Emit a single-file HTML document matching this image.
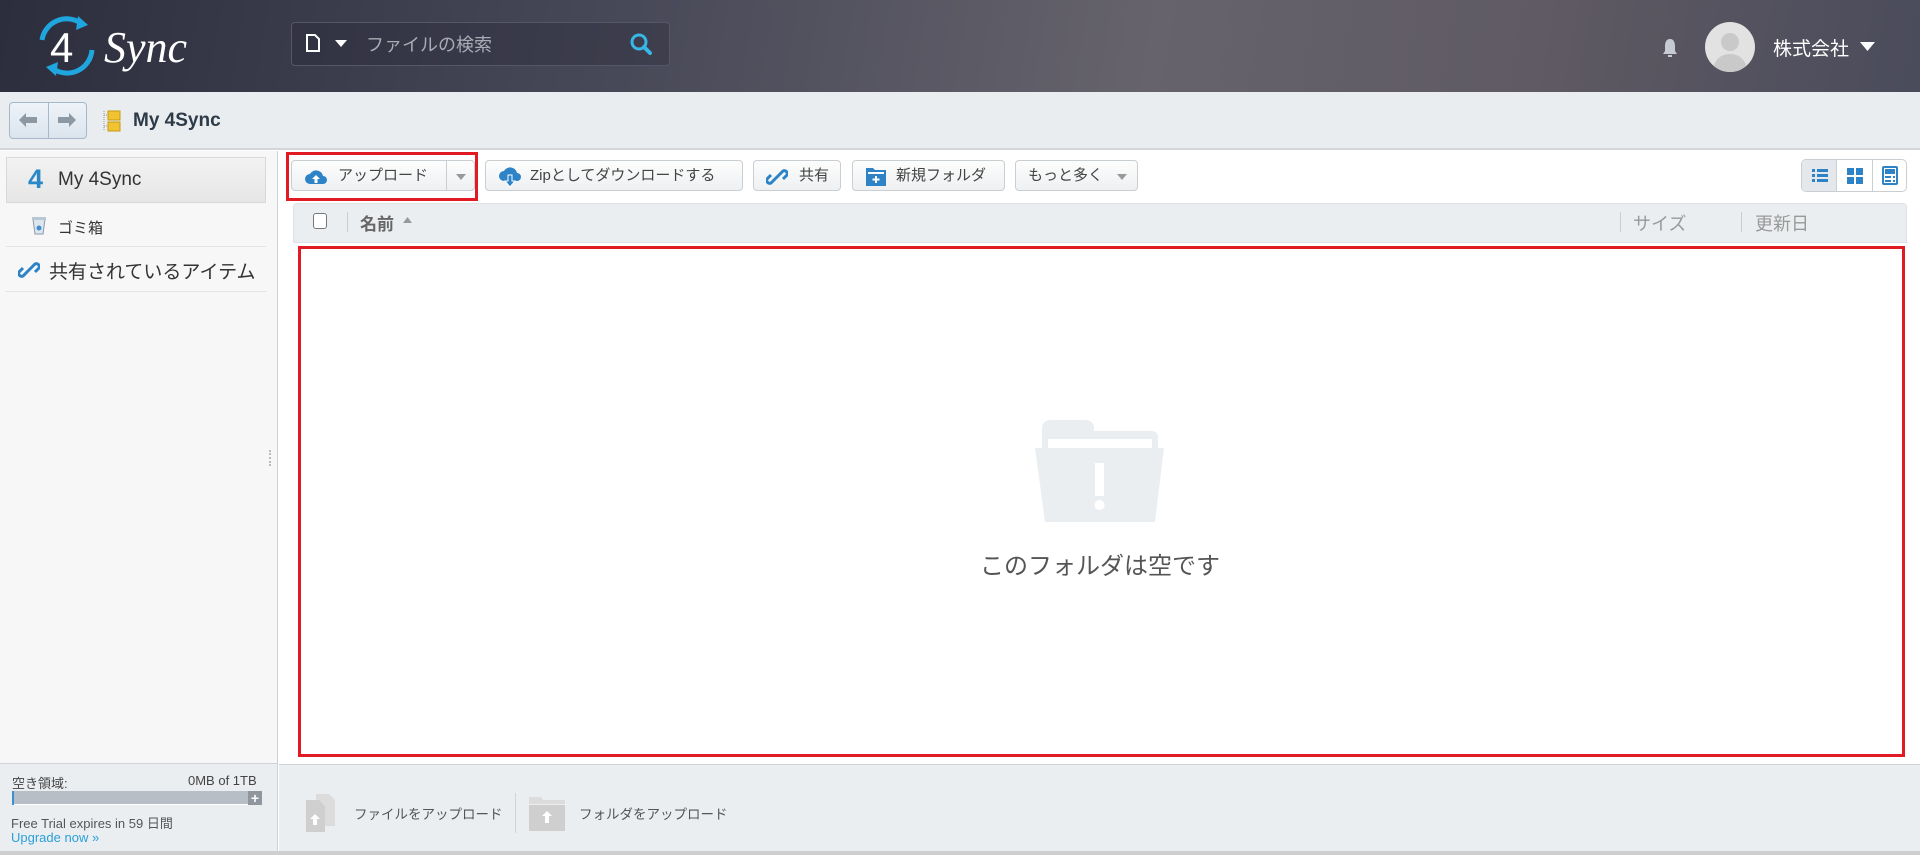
<!DOCTYPE html>
<html><head><meta charset="utf-8"><style>
*{box-sizing:border-box;margin:0;padding:0}
body{width:1920px;height:855px;overflow:hidden;font-family:"Liberation Sans","Noto Sans CJK JP",sans-serif;background:#fff;position:relative;color:#333}
.abs{position:absolute}
#hdr{left:0;top:0;width:1920px;height:92px;background:linear-gradient(100deg,#2c2d3d 0%,#454656 30%,#66636c 60%,#5f5a63 80%,#4a4b5b 100%)}
.btn{position:absolute;top:160px;height:31px;border:1px solid #c9ced3;border-radius:4px;background:linear-gradient(#fdfdfd,#eef0f2);font-size:15px;color:#444;line-height:29px;white-space:nowrap}
.btn svg{position:absolute;top:6px}
</style></head><body>
<div id="hdr" class="abs">
 <svg class="abs" style="left:30px;top:10px" width="170" height="72" viewBox="0 0 170 72">
  <path d="M12 30 A25 25 0 0 1 52 14" fill="none" stroke="#1fa6df" stroke-width="5"/>
  <path d="M48 6 L58 15 L46 20 Z" fill="#1fa6df"/>
  <path d="M62 40 A25 25 0 0 1 22 58" fill="none" stroke="#1fa6df" stroke-width="5"/>
  <path d="M26 66 L16 57 L28 52 Z" fill="#1fa6df"/>
  <text x="20" y="52" font-family="Liberation Sans" font-size="42" fill="#fff">4</text>
  <text x="74" y="52" font-family="Liberation Serif" font-style="italic" font-size="44" fill="#fff">Sync</text>
 </svg>
 <div class="abs" style="left:291px;top:22px;width:379px;height:44px;border:1px solid #55566a;border-radius:4px;background:rgba(40,40,55,.35)"></div>
 <svg class="abs" style="left:306px;top:34px" width="14" height="18"><path d="M1 1h8l4 4v12H1z" fill="none" stroke="#fff" stroke-width="2"/></svg>
 <svg class="abs" style="left:335px;top:40px" width="12" height="8"><path d="M0 0h12L6 7z" fill="#fff"/></svg>
 <div class="abs" style="left:366px;top:31px;font-size:18px;color:#a9abb5">ファイルの検索</div>
 <svg class="abs" style="left:630px;top:33px" width="22" height="22"><circle cx="9" cy="9" r="7" fill="none" stroke="#38b6e6" stroke-width="3"/><path d="M14 14l6 6" stroke="#38b6e6" stroke-width="4" stroke-linecap="round"/></svg>
 <svg class="abs" style="left:1661px;top:37px" width="18" height="22"><path d="M9 2c-4 0-5 4-5 7v5l-2 3h14l-2-3V9c0-3-1-7-5-7z" fill="#c5cad4"/><rect x="7" y="18" width="4" height="2" fill="#c5cad4"/></svg>
 <div class="abs" style="left:1705px;top:22px;width:50px;height:50px;border-radius:50%;background:#e2e2e2;overflow:hidden">
  <svg width="50" height="50"><circle cx="25" cy="20" r="9" fill="#c9c9c9"/><path d="M8 50c0-12 8-18 17-18s17 6 17 18z" fill="#c9c9c9"/></svg></div>
 <div class="abs" style="left:1773px;top:34px;font-size:19px;color:#fff">株式会社</div>
 <svg class="abs" style="left:1860px;top:42px" width="15" height="10"><path d="M0 0h15L7.5 9z" fill="#fff"/></svg>
</div>
<div class="abs" style="left:0;top:92px;width:1920px;height:58px;background:#e9edf0;border-bottom:2px solid #d3d6d9"></div>
<div class="abs" style="left:9px;top:102px;width:78px;height:37px;border:1px solid #a8b8cc;border-radius:4px;background:linear-gradient(#eef3f8,#dbe4ee)"></div>
<div class="abs" style="left:48px;top:103px;width:1px;height:35px;background:#a8b8cc"></div>
<svg class="abs" style="left:19px;top:113px" width="18" height="14"><path d="M0 7l7-7v4h11v6H7v4z" fill="#8c98a4"/></svg>
<svg class="abs" style="left:58px;top:113px" width="18" height="14"><path d="M18 7l-7-7v4H0v6h11v4z" fill="#8c98a4"/></svg>
<svg class="abs" style="left:102px;top:110px" width="20" height="22"><path d="M2 1v19M2 5h4M2 16h4" stroke="#999" stroke-dasharray="1 1"/><rect x="6" y="1" width="12" height="9" fill="#f1c232" stroke="#c89a10"/><rect x="6" y="12" width="12" height="9" fill="#f1c232" stroke="#c89a10"/></svg>
<div class="abs" style="left:133px;top:110px;font-size:19px;font-weight:bold;color:#2d3a47">My 4Sync</div>

<div class="abs" style="left:0;top:151px;width:278px;height:700px;background:#f7f7f7;border-right:1px solid #c8d3dd"></div>
<div class="abs" style="left:6px;top:157px;width:260px;height:46px;background:linear-gradient(#f2f2f2,#e6e6e6);border:1px solid #d8d8d8"></div>
<div class="abs" style="left:28px;top:164px;font-size:27px;color:#2a88c8;font-weight:bold">4</div>
<div class="abs" style="left:58px;top:169px;font-size:19px;color:#333">My 4Sync</div>
<svg class="abs" style="left:31px;top:216px" width="16" height="19"><path d="M2 3h12l-2 15H4z" fill="#dde6ee" stroke="#8a9aa8"/><rect x="1" y="1" width="14" height="3" fill="#b9c7d3"/><circle cx="8" cy="12" r="2.5" fill="#3f8fd0"/></svg>
<div class="abs" style="left:58px;top:217px;font-size:15px;color:#333">ゴミ箱</div>
<div class="abs" style="left:6px;top:246px;width:260px;height:1px;background:#e4e4e4"></div>
<svg class="abs" style="left:18px;top:259px" width="22" height="22"><path d="M9 13l-4 4a3 3 0 0 1-4-4l4-4M13 9l4-4a3 3 0 0 1 4 4l-4 4M8 14l6-6" fill="none" stroke="#2d83c6" stroke-width="3"/></svg>
<div class="abs" style="left:49px;top:257px;font-size:19px;color:#333">共有されているアイテム</div>
<div class="abs" style="left:6px;top:291px;width:260px;height:1px;background:#e4e4e4"></div>
<div class="abs" style="left:269px;top:450px;width:2px;height:16px;border-left:2px dotted #bbb"></div>

<div class="abs" style="left:0;top:763px;width:278px;height:88px;background:#ebeef1;border-top:1px solid #d0d4d8;border-right:1px solid #c8d3dd"></div>
<div class="abs" style="left:12px;top:773px;font-size:13px;color:#444">空き領域:</div>
<div class="abs" style="left:188px;top:773px;font-size:13px;color:#444">0MB of 1TB</div>
<div class="abs" style="left:12px;top:791px;width:250px;height:14px;background:#b7bec6;border-bottom:1px solid #fff"></div>
<div class="abs" style="left:12px;top:791px;width:2px;height:14px;background:#3d8fd2"></div>
<div class="abs" style="left:248px;top:791px;width:14px;height:14px;background:#8f969e;color:#fff;font-size:14px;line-height:14px;text-align:center;font-weight:bold">+</div>
<div class="abs" style="left:11px;top:813px;font-size:13px;color:#555">Free Trial expires in 59 日間</div>
<div class="abs" style="left:11px;top:830px;font-size:13px;color:#2aa0d8">Upgrade now »</div>

<div class="abs" style="left:286px;top:152px;width:192px;height:49px;border:3px solid #e21a23"></div>
<div class="btn" style="left:291px;width:184px"><svg style="left:13px" width="22" height="18"><path d="M5 17a5 5 0 0 1 0-10 7 7 0 0 1 13 2 4 4 0 0 1 0 8z" fill="#2d83c6"/><path d="M11 8l-4 4h2.5v4h3v-4H15z" fill="#fff"/></svg><span style="position:absolute;left:46px">アップロード</span><span style="position:absolute;left:154px;top:0;width:1px;height:29px;background:#c9ced3"></span><svg style="left:164px;top:13px" width="10" height="6"><path d="M0 0h10L5 6z" fill="#999"/></svg></div>
<div class="btn" style="left:485px;width:258px"><svg style="left:13px;top:5px" width="22" height="22"><path d="M5 15a5 5 0 0 1 0-10 7 7 0 0 1 13 2 4 4 0 0 1 0 8z" fill="#2d83c6"/><path d="M9 9h4v6h3l-5 6-5-6h3z" fill="#2d83c6" stroke="#fff"/></svg><span style="position:absolute;left:44px">Zipとしてダウンロードする</span></div>
<div class="btn" style="left:753px;width:88px"><svg style="left:12px" width="22" height="20"><path d="M9 12l-4 4a3 3 0 0 1-4-4l4-4M13 8l4-4a3 3 0 0 1 4 4l-4 4M8 13l6-6" fill="none" stroke="#2d83c6" stroke-width="3"/></svg><span style="position:absolute;left:45px">共有</span></div>
<div class="btn" style="left:852px;width:153px"><svg style="left:13px;top:5px" width="20" height="20"><path d="M0 2h7l2 2h11v16H0z" fill="#2d83c6"/><rect x="2" y="6" width="16" height="2" fill="#fff"/><path d="M10 10v7M6.5 13.5h7" stroke="#fff" stroke-width="2"/></svg><span style="position:absolute;left:43px">新規フォルダ</span></div>
<div class="btn" style="left:1015px;width:123px"><span style="position:absolute;left:12px">もっと多く</span><svg style="left:101px;top:13px" width="10" height="6"><path d="M0 0h10L5 6z" fill="#999"/></svg></div>
<div class="abs" style="left:1801px;top:159px;width:106px;height:33px;border:1px solid #c9ced3;border-radius:5px;background:#fff;overflow:hidden">
 <div class="abs" style="left:0;top:0;width:35px;height:31px;background:#e4e8ec;border-right:1px solid #c9ced3"></div>
 <div class="abs" style="left:70px;top:0;width:1px;height:31px;background:#c9ced3"></div>
 <svg class="abs" style="left:10px;top:8px" width="16" height="16"><path d="M0 1h3v3H0zM5 1h11v3H5zM0 6h3v3H0zM5 6h11v3H5zM0 11h3v3H0zM5 11h11v3H5z" fill="#2d83c6"/></svg>
 <svg class="abs" style="left:45px;top:8px" width="16" height="16"><path d="M0 0h7v7H0zM9 0h7v7H9zM0 9h7v7H0zM9 9h7v7H9z" fill="#2d83c6"/></svg>
 <svg class="abs" style="left:80px;top:6px" width="16" height="19"><rect x="1" y="1" width="14" height="17" rx="1" fill="none" stroke="#2d83c6" stroke-width="2"/><path d="M3 3h10v5H3zM3 10h6v2H3zM3 14h6v2H3zM11 10h2v2h-2zM11 14h2v2h-2z" fill="#2d83c6"/></svg>
</div>

<div class="abs" style="left:293px;top:203px;width:1614px;height:40px;background:#ebeef1;border:1px solid #dde1e5;border-radius:4px 4px 0 0"></div>
<div class="abs" style="left:313px;top:213px;width:14px;height:16px;border:1px solid #777;border-radius:3px;background:#fff"></div>
<div class="abs" style="left:347px;top:212px;width:1px;height:20px;background:#ccc"></div>
<div class="abs" style="left:360px;top:210px;font-size:17px;font-weight:bold;color:#666">名前</div>
<svg class="abs" style="left:403px;top:217px" width="9" height="6"><path d="M0 6h9L4.5 0z" fill="#999"/></svg>
<div class="abs" style="left:1620px;top:212px;width:1px;height:20px;background:#ccc"></div>
<div class="abs" style="left:1633px;top:210px;font-size:18px;color:#999">サイズ</div>
<div class="abs" style="left:1741px;top:212px;width:1px;height:20px;background:#ccc"></div>
<div class="abs" style="left:1755px;top:210px;font-size:18px;color:#999">更新日</div>

<div class="abs" style="left:298px;top:246px;width:1607px;height:511px;border:3px solid #e21a23;background:#fff"></div>
<svg class="abs" style="left:1035px;top:420px" width="130" height="102" viewBox="0 0 130 102"><path d="M7 8a8 8 0 0 1 8-8h36a8 8 0 0 1 8 8v3h58a6 6 0 0 1 6 6v20H7z" fill="#ebeef1"/><rect x="13" y="19" width="104" height="10" fill="#fff"/><path d="M0 28h129l-9 74H10z" fill="#ebeef1"/><rect x="60" y="43" width="9" height="33" fill="#fff"/><circle cx="64.5" cy="85" r="5" fill="#fff"/></svg>
<div class="abs" style="left:960px;top:546px;width:280px;text-align:center;font-size:24px;color:#555">このフォルダは空です</div>

<div class="abs" style="left:279px;top:764px;width:1641px;height:87px;background:#ebeef1;border-top:1px solid #d0d4d8"></div>
<svg class="abs" style="left:306px;top:794px" width="36" height="38"><path d="M10 0h13l6 6v26H10z" fill="#dcdcdc"/><path d="M0 6h13l6 6v26H0z" fill="#cfcfcf"/><path d="M9 20l-5 5h3v6h4v-6h3z" fill="#fff"/></svg>
<div class="abs" style="left:354px;top:803px;font-size:13.5px;color:#555">ファイルをアップロード</div>
<div class="abs" style="left:515px;top:793px;width:1px;height:40px;background:#d0d4d8"></div>
<svg class="abs" style="left:529px;top:795px" width="36" height="36"><path d="M0 2h12l2 3h22v4H0z" fill="#dcdcdc"/><rect x="0" y="10" width="36" height="26" fill="#cfcfcf"/><path d="M18 16l-5 5h3v7h4v-7h3z" fill="#fff"/></svg>
<div class="abs" style="left:579px;top:803px;font-size:13.5px;color:#555">フォルダをアップロード</div>
<div class="abs" style="left:0;top:851px;width:1920px;height:4px;background:#cfcfcf"></div>
</body></html>
